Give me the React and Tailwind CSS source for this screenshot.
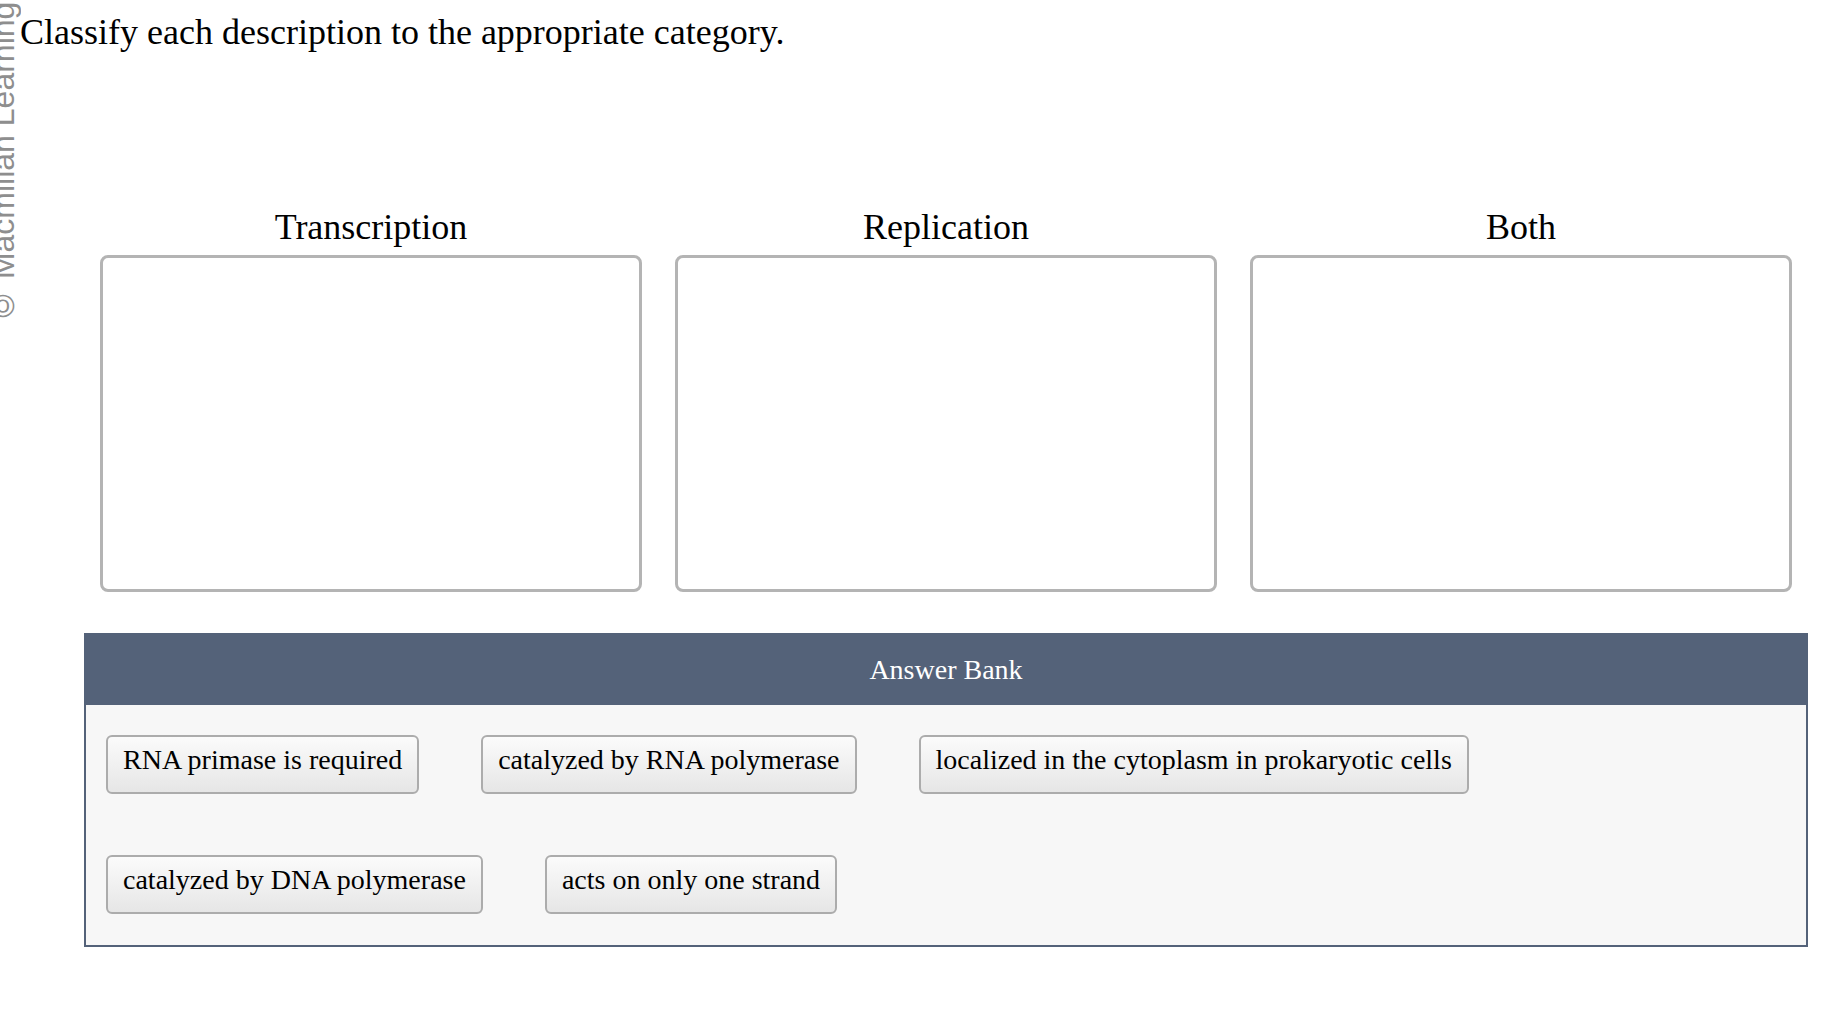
import React from "react";

const categories = ["Transcription", "Replication", "Both"];
const rows = [
  ["RNA primase is required", "catalyzed by RNA polymerase", "localized in the cytoplasm in prokaryotic cells"],
  ["catalyzed by DNA polymerase", "acts on only one strand"],
];

function Chip({ children }) {
  return (
    <div className="h-[59px] px-[15px] pt-[7px] border-2 border-[#acacac] rounded-[6px] bg-gradient-to-b from-[#fbfbfb] to-[#e6e6e6] text-[28px] leading-8 text-black whitespace-nowrap">
      {children}
    </div>
  );
}

export default function App() {
  return (
    <div className="relative min-h-[1034px] bg-white font-['Liberation_Serif',serif] text-black overflow-hidden">
      <div className="absolute left-[-13px] top-0 h-[324px] [writing-mode:vertical-rl] rotate-180 font-['Liberation_Sans',sans-serif] text-[32px] leading-none text-[#8e8e8e] whitespace-nowrap">
        © Macmillan Learning
      </div>

      <h1 className="pl-[20px] pt-[14px] text-[36px] leading-none font-normal">
        Classify each description to the appropriate category.
      </h1>

      <div className="ml-[100px] w-[1692px] mt-[159px] grid grid-cols-3 gap-x-[33px]">
        {categories.map((c) => (
          <div key={c} className="flex flex-col">
            <div className="text-center text-[36px] leading-none h-[46px]">{c}</div>
            <div className="h-[337px] border-[3px] border-[#b4b4b4] rounded-[8px] bg-white" />
          </div>
        ))}
      </div>

      <div className="ml-[84px] w-[1724px] mt-[41px] border-2 border-[#546279]">
        <div className="h-[70px] bg-[#546279] flex items-center justify-center text-white text-[28px] leading-none">
          Answer Bank
        </div>
        <div className="bg-[#f7f7f7] pl-[20px] pt-[30px] pb-[31px] flex flex-col gap-y-[61px]">
          {rows.map((r, i) => (
            <div key={i} className="flex gap-x-[62px]">
              {r.map((t) => (
                <Chip key={t}>{t}</Chip>
              ))}
            </div>
          ))}
        </div>
      </div>
    </div>
  );
}
